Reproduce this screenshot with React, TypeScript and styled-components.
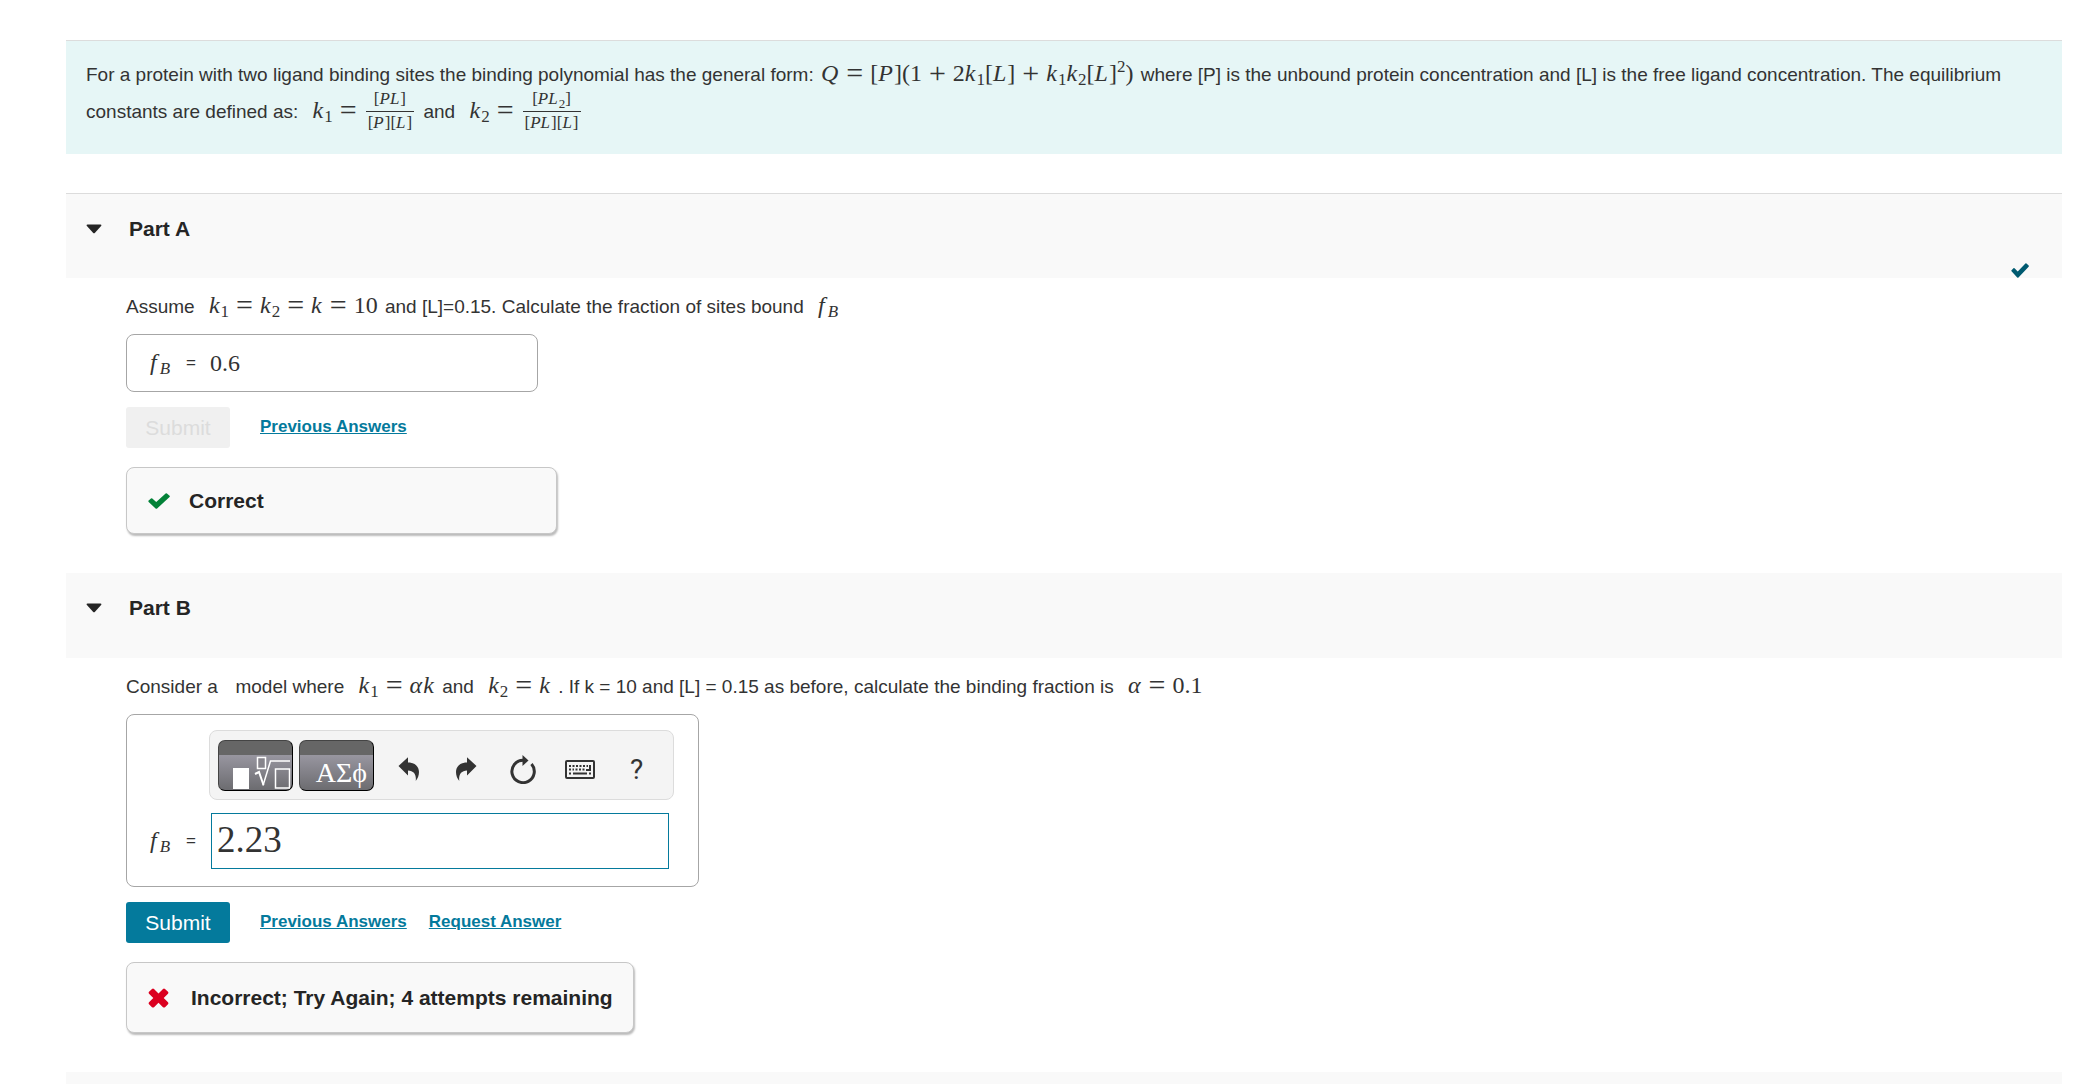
import React, { useState } from "react";
import styled, { createGlobalStyle } from "styled-components";

const sans = `"Liberation Sans", Arial, sans-serif`;
const serif = `"Liberation Serif", "Times New Roman", serif`;

const GlobalStyle = createGlobalStyle`
  *, *::before, *::after { box-sizing: border-box; }
  body { margin: 0; background: #fff; color: #333; font-family: ${sans}; font-size: 19px; }
`;

const Page = styled.main`
  padding: 40px 28px 0 66px;
`;

const Intro = styled.section`
  padding: 15px 12px 24px 20px;
  margin-bottom: 39px;
  border-top: 1px solid #dcdcdc;
  background: #e6f6f6;
  line-height: 37px;
  p { margin: 0; }
`;

const PartHeader = styled.header<{ $ruled?: boolean }>`
  display: flex;
  justify-content: space-between;
  align-items: flex-end;
  height: 85px;
  padding-right: 33px;
  border-top: ${(p) => (p.$ruled ? "1px solid #dcdcdc" : "0")};
  background: #f9f9f9;
`;

const NextPartEdge = styled.div`
  height: 12px;
  background: #f9f9f9;
`;

const PartTitle = styled.h2`
  align-self: flex-start;
  margin: 0;
  font-size: 21px;
  line-height: 24px;
`;

const Toggle = styled.button`
  display: flex;
  align-items: center;
  gap: 27px;
  padding: 23px 20px;
  border: 0;
  background: none;
  color: #252525;
  font: inherit;
  cursor: pointer;
`;

const PartBody = styled.div`
  display: flex;
  flex-direction: column;
  align-items: flex-start;
  padding: 13px 0 39px 60px;
`;

const Question = styled.p`
  margin: 0 0 11px;
  line-height: 32px;
`;

const Formula = styled.span`
  margin: 0 2px;
  font-family: ${serif};
  font-size: 24px;
  line-height: 24px;
  white-space: nowrap;
  i { padding-right: 1px; }
  sub, sup { font-size: 17px; line-height: 17px; }
  sub { vertical-align: -4px; }
  sup { vertical-align: 9px; }
`;

const Op = styled.span`
  margin: 0 7px;
  font-size: 30px;
  line-height: 24px;
  vertical-align: -2px;
`;

const Gap = styled.span`
  display: inline-block;
  width: 7px;
`;

const Fraction = styled.span`
  display: inline-flex;
  flex-direction: column;
  align-items: center;
  margin: -8px 2px;
  font-size: 17px;
  line-height: 22px;
  vertical-align: 14px;
  sub { font-size: 13px; line-height: 13px; }
`;

const Numerator = styled.span`
  padding-bottom: 1px;
`;

const Denominator = styled.span`
  padding: 0 2px;
  border-top: 1px solid #333;
`;

const AnswerBox = styled.div`
  display: flex;
  align-items: center;
  width: 412px;
  height: 58px;
  padding-left: 21px;
  border: 1px solid #a6a6a6;
  border-radius: 8px;
`;

const EditorBox = styled.div`
  display: grid;
  grid-template-columns: 61px 465px;
  row-gap: 13px;
  align-items: center;
  width: 573px;
  padding: 15px 24px 17px 21px;
  border: 1px solid #a6a6a6;
  border-radius: 8px;
`;

const AnswerLabel = styled.label`
  display: flex;
  align-items: center;
  width: 62px;
  gap: 13px;
`;

const Equals = styled.span`
  font-size: 17px;
`;

const GivenAnswer = styled.input`
  width: 300px;
  padding: 0;
  border: 0;
  outline: 0;
  background: none;
  color: #333;
  font: 24px ${serif};
`;

const AnswerInput = styled.input`
  grid-column: 2;
  width: 458px;
  height: 56px;
  margin-left: 2px;
  padding: 0 5px 4px;
  border: 1px solid #047a9c;
  outline: 0;
  color: #333;
  font: 37px ${serif};
`;

const Toolbar = styled.div`
  grid-column: 2;
  display: flex;
  align-items: center;
  height: 70px;
  padding: 0 8px;
  border: 1px solid #dcdcdc;
  border-radius: 8px;
  background: #f4f4f4;
`;

const PaletteButton = styled.button`
  display: flex;
  align-items: flex-end;
  justify-content: flex-end;
  width: 75px;
  height: 51px;
  margin-right: 6px;
  padding: 0;
  border: 1px solid #000;
  border-top-color: #444;
  border-left-color: #444;
  border-radius: 7px;
  background: linear-gradient(#666 0 14px, #9896a0 14px, #6c6c70 100%);
  color: #fff;
  font: 28px/34px ${serif};
  overflow: hidden;
  cursor: pointer;
  span { padding-right: 6px; }
`;

const ToolButton = styled.button`
  display: flex;
  align-items: center;
  justify-content: center;
  width: 57px;
  height: 50px;
  padding: 8px 0 0;
  border: 0;
  background: none;
  color: #333;
  font: 28px Roboto, ${sans};
  cursor: pointer;
`;

const Actions = styled.div`
  display: flex;
  align-items: center;
  margin: 15px 0 19px;
`;

const Submit = styled.button`
  width: 104px;
  height: 41px;
  margin-right: 30px;
  padding: 0;
  border: 0;
  border-radius: 3px;
  background: #047a9c;
  color: #fff;
  font: 21px ${sans};
  cursor: pointer;
  &:disabled { background: #f0f0f0; color: #dcdcdc; cursor: default; }
`;

const Link = styled.a`
  margin: 0 22px 2px 0;
  color: #047a9c;
  font-size: 17px;
  font-weight: bold;
  line-height: 22px;
`;

const Feedback = styled.div<{ $roomy?: boolean }>`
  display: flex;
  align-items: center;
  gap: ${(p) => (p.$roomy ? 22 : 19)}px;
  min-width: 431px;
  height: ${(p) => (p.$roomy ? 71 : 67)}px;
  padding: 0 20px 0 21px;
  border: 1px solid #c7c7c7;
  border-radius: 8px;
  background: #f9f9f9;
  box-shadow: 1px 2px 2px #bbb;
  color: #252525;
  font-size: 21px;
  font-weight: bold;
`;

const Caret = () => (
  <svg width="16" height="10" viewBox="0 0 16 10" aria-hidden="true">
    <path d="M1.500 .5h13c1 0 1.200.8.6 1.500L9 8.700c-.7.7-1.300.7-2 0L.9 2C.3 1.300.5.5 1.500.5z" fill="currentColor" />
  </svg>
);

const Check = ({ color, width, height }: { color: string; width: number; height: number }) => (
  <svg width={width} height={height} viewBox="0 0 20 16" preserveAspectRatio="none" aria-hidden="true">
    <path d="M.6 7.600 2.700 5.500q.6-.6 1.200 0L7.500 9 16 .5q.6-.6 1.200 0L19.600 2.700q.6.6 0 1.200L8.300 15.400q-.7.7-1.400 0L.6 8.900q-.6-.7 0-1.300z" fill={color} />
  </svg>
);

const Cross = () => (
  <svg width="21" height="20" viewBox="0 0 21 20" aria-hidden="true">
    <path d="M1 3.800 4 .9q1-.9 2 0L10.500 5.400 15 .9q1-.9 2 0l3 2.900q.9 1 0 2L15.700 10l4.300 4.300q.9 1 0 2L17 19.200q-1 .8-2 0L10.500 14.700 6 19.200q-1 .8-2 0L1 16.300q-.9-1 0-2L5.300 10 1 5.800q-.9-1 0-2z" fill="#db0020" />
  </svg>
);

const TemplatesIcon = () => (
  <svg width="60" height="34" viewBox="0 0 60 34" aria-hidden="true">
    <rect x="1" y="12" width="16" height="21" fill="#fff" />
    <g fill="none" stroke="#fff">
      <rect x="25.500" y="1.500" width="8" height="11" strokeWidth="1.500" fill="#87858c" />
      <path d="M23 18l4-2 4.500 13" strokeWidth="2" />
      <path d="M31 29.500 38.500 5H58" strokeWidth="1.500" />
      <rect x="43.500" y="13" width="14" height="19" strokeWidth="1.500" />
    </g>
  </svg>
);

const UndoIcon = ({ flipped }: { flipped?: boolean }) => (
  <svg width="22" height="25" viewBox="0 0 22 25" aria-hidden="true">
    <path
      transform={flipped ? "matrix(-1 0 0 1 22 0)" : undefined}
      d="M.5 9 10 .2v5.200c7 0 11 4.200 11 9.600 0 3.500-1.300 6.500-3.300 9.100.9-6.600-1.700-10.400-7.700-10.700v5z"
      fill="currentColor"
    />
  </svg>
);

const ResetIcon = () => (
  <svg width="26" height="29" viewBox="0 0 26 29" aria-hidden="true">
    <path d="M13 5.200A11.200 11.200 0 1 0 21.500 9" fill="none" stroke="currentColor" strokeWidth="3" />
    <path d="M12.500 0v11l6-5.500z" fill="currentColor" />
  </svg>
);

const KeyboardIcon = () => (
  <svg width="30" height="19" viewBox="0 0 30 19" aria-hidden="true">
    <rect x="1" y="1" width="28" height="17" rx="1" fill="none" stroke="currentColor" strokeWidth="2" />
    <g fill="none" stroke="currentColor" strokeWidth="2">
      <path d="M4 6h19" strokeDasharray="2 1.500" />
      <path d="M4 9.500h5M10.500 9.500h10" strokeDasharray="2 1.500" />
      <path d="M4 13.500h2M8 13.500h14M24 13.500h2M25 5v5h-4" />
    </g>
  </svg>
);

const K = ({ n }: { n?: number }) => (
  <>
    <i>k</i>
    {n && <sub>{n}</sub>}
  </>
);

const Subscript = styled.sub`
  padding-left: 2px;
`;

const FB = () => (
  <Formula>
    <i>f</i>
    <Subscript><i>B</i></Subscript>
  </Formula>
);

function Part({ title, done, ruled, children }: {
  title: string;
  done?: boolean;
  ruled?: boolean;
  children: React.ReactNode;
}) {
  const [open, setOpen] = useState(true);
  return (
    <section>
      <PartHeader $ruled={ruled}>
        <PartTitle>
          <Toggle aria-expanded={open} onClick={() => setOpen(!open)}>
            <Caret />
            {title}
          </Toggle>
        </PartTitle>
        {done && <Check color="#005a70" width={18} height={15} />}
      </PartHeader>
      {open && <PartBody>{children}</PartBody>}
    </section>
  );
}

export default function App() {
  const [answer, setAnswer] = useState("2.23");
  return (
    <>
      <GlobalStyle />
      <Page>
        <Intro>
          <p>
            For a protein with two ligand binding sites the binding polynomial has the general form:{" "}
            <Formula>
              <i>Q</i>
              <Op>=</Op>[<i>P</i>](1<Op>+</Op>2<K n={1} />[<i>L</i>]<Op>+</Op>
              <K n={1} />
              <K n={2} />[<i>L</i>]<sup>2</sup>)
            </Formula>{" "}
            where [P] is the unbound protein concentration and [L] is the free ligand concentration. The equilibrium
            constants are defined as: <Gap />
            <Formula>
              <K n={1} />
              <Op>=</Op>
              <Fraction>
                <Numerator>[<i>PL</i>]</Numerator>
                <Denominator>[<i>P</i>][<i>L</i>]</Denominator>
              </Fraction>
            </Formula>{" "}
            and <Gap />
            <Formula>
              <K n={2} />
              <Op>=</Op>
              <Fraction>
                <Numerator>[<i>PL</i><sub>2</sub>]</Numerator>
                <Denominator>[<i>PL</i>][<i>L</i>]</Denominator>
              </Fraction>
            </Formula>
          </p>
        </Intro>

        <Part title="Part A" done ruled>
          <Question>
            Assume <Gap />
            <Formula>
              <K n={1} /><Op>=</Op><K n={2} /><Op>=</Op><K /><Op>=</Op>10
            </Formula>{" "}
            and [L]=0.15. Calculate the fraction of sites bound <Gap />
            <FB />
          </Question>
          <AnswerBox>
            <AnswerLabel htmlFor="answer-a"><FB /> <Equals>=</Equals></AnswerLabel>
            <GivenAnswer id="answer-a" readOnly value="0.6" />
          </AnswerBox>
          <Actions>
            <Submit disabled>Submit</Submit>
            <Link href="#previous-a">Previous Answers</Link>
          </Actions>
          <Feedback role="status">
            <Check color="#038238" width={22} height={16} />
            Correct
          </Feedback>
        </Part>

        <Part title="Part B">
          <Question>
            Consider a <Gap /> model where <Gap />
            <Formula><K n={1} /><Op>=</Op><i>α</i><K /></Formula> and <Gap />
            <Formula><K n={2} /><Op>=</Op><K /></Formula> . If k = 10 and [L] = 0.15 as before, calculate the binding
            fraction is <Gap />
            <Formula><i>α</i><Op>=</Op>0.1</Formula>
          </Question>
          <EditorBox>
            <Toolbar role="toolbar" aria-label="Equation tools">
              <PaletteButton aria-label="Templates"><TemplatesIcon /></PaletteButton>
              <PaletteButton aria-label="Symbols"><span>ΑΣϕ</span></PaletteButton>
              <ToolButton aria-label="Undo"><UndoIcon /></ToolButton>
              <ToolButton aria-label="Redo"><UndoIcon flipped /></ToolButton>
              <ToolButton aria-label="Reset"><ResetIcon /></ToolButton>
              <ToolButton aria-label="Keyboard shortcuts"><KeyboardIcon /></ToolButton>
              <ToolButton aria-label="Help">?</ToolButton>
            </Toolbar>
            <AnswerLabel htmlFor="answer-b"><FB /> <Equals>=</Equals></AnswerLabel>
            <AnswerInput id="answer-b" value={answer} onChange={(e) => setAnswer(e.target.value)} />
          </EditorBox>
          <Actions>
            <Submit>Submit</Submit>
            <Link href="#previous-b">Previous Answers</Link>
            <Link href="#request-b">Request Answer</Link>
          </Actions>
          <Feedback role="status" $roomy>
            <Cross />
            Incorrect; Try Again; 4 attempts remaining
          </Feedback>
        </Part>
        <NextPartEdge />
      </Page>
    </>
  );
}
